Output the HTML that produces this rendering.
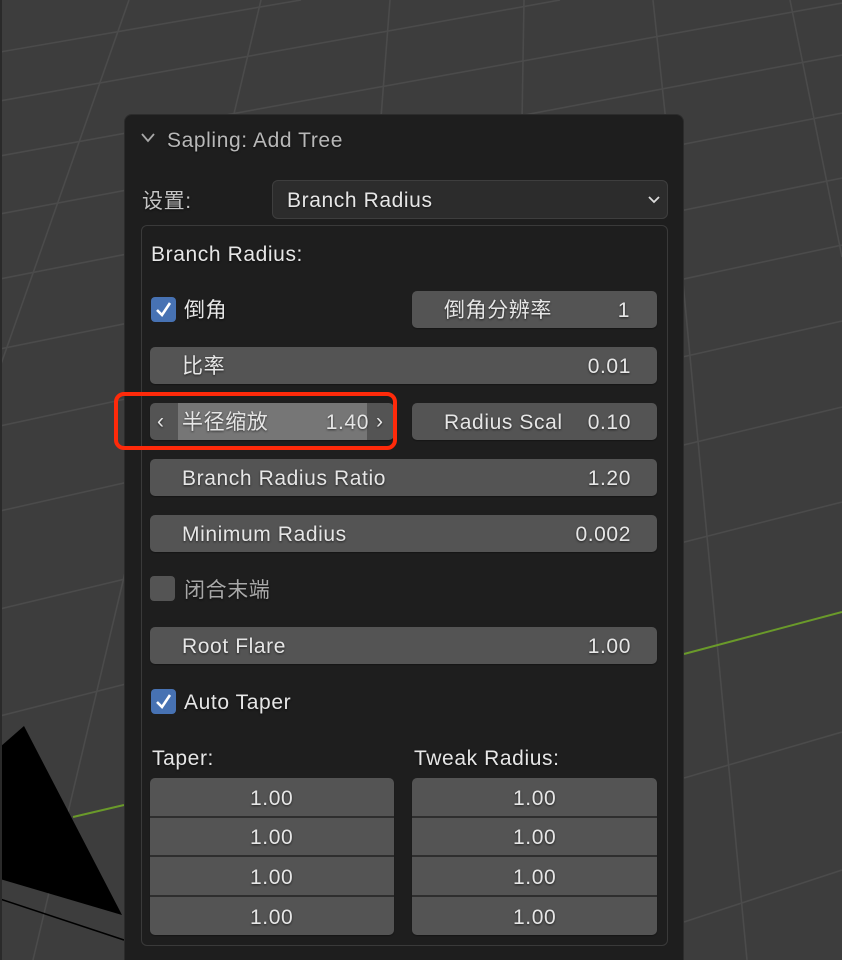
<!DOCTYPE html>
<html><head><meta charset="utf-8"><style>
*{box-sizing:border-box;margin:0;padding:0}
html,body{width:842px;height:960px;overflow:hidden}
body{background:#3d3d3d;position:relative;font-family:"Liberation Sans","Noto Sans CJK SC",sans-serif;font-size:21px;letter-spacing:0.6px;color:#e6e6e6}
.a{position:absolute}
.t{position:absolute;white-space:nowrap;line-height:1;text-shadow:0 1px 2px rgba(0,0,0,.6)}
.r{position:absolute;white-space:nowrap;line-height:1;text-align:right;text-shadow:0 1px 2px rgba(0,0,0,.6)}
.btn{position:absolute;background:#545454;border-radius:5px;box-shadow:0 1px 1px #161616}
.cb{position:absolute;width:25px;height:25px;border-radius:4px;background:#4772b3}
.cb svg{position:absolute;left:3px;top:3px}
</style></head><body>
<svg class="a" style="left:0;top:0" width="842" height="960">
<g stroke="#4b4b4b" stroke-width="1.6" fill="none">
<line x1="0" y1="52" x2="301" y2="0"/><line x1="0" y1="101" x2="560" y2="0"/>
<line x1="0" y1="156" x2="842" y2="3"/><line x1="0" y1="214" x2="842" y2="55"/><line x1="0" y1="279" x2="842" y2="113"/><line x1="0" y1="349" x2="842" y2="178"/><line x1="0" y1="426" x2="842" y2="245"/><line x1="0" y1="511" x2="842" y2="321"/><line x1="0" y1="609" x2="842" y2="407"/><line x1="0" y1="716" x2="842" y2="502"/>
<line x1="684" y1="778" x2="842" y2="732"/><line x1="684" y1="922" x2="842" y2="870"/>
<line x1="129" y1="0" x2="0" y2="367"/><line x1="261" y1="0" x2="33" y2="960"/><line x1="390" y1="0" x2="376" y2="183"/><line x1="524" y1="0" x2="521" y2="183"/><line x1="653" y1="0" x2="683" y2="282"/><line x1="683" y1="282" x2="747" y2="960"/><line x1="790" y1="0" x2="842" y2="257"/>
</g>
<line x1="73" y1="817" x2="124" y2="805" stroke="#6a9a2a" stroke-width="2"/>
<line x1="684" y1="654" x2="842" y2="612" stroke="#6a9a2a" stroke-width="2"/>
<polygon points="0,747 24,726 122,915 0,879" fill="#000"/>
<line x1="0" y1="899" x2="124" y2="940" stroke="#000" stroke-width="1.5"/>
<line x1="1" y1="0" x2="1" y2="960" stroke="#2a2a2a" stroke-width="2"/>
</svg>
<div class="a" style="left:124px;top:114px;width:560px;height:860px;background:#1e1e1e;border:1px solid #2c2c2c;border-radius:8px"></div>
<svg class="a" style="left:140px;top:132px" width="16" height="12"><path d="M2 2 L8 9 L14 2" stroke="#a8a8a8" stroke-width="1.8" fill="none"/></svg>
<div class="t" style="left:167px;top:130px;color:#b8b8b8">Sapling: Add Tree</div>
<div class="t" style="left:142px;top:191px;color:#c4c4c4">设置:</div>
<div class="a" style="left:272px;top:180px;width:396px;height:39px;background:#2c2c2c;border:1px solid #3e3e3e;border-radius:6px"></div>
<div class="t" style="left:287px;top:190px">Branch Radius</div>
<svg class="a" style="left:647px;top:195px" width="14" height="10"><path d="M2 2 L7 7 L12 2" stroke="#ddd" stroke-width="1.8" fill="none"/></svg>
<div class="a" style="left:141px;top:225px;width:527px;height:721px;border:1.5px solid #3a3a3a;border-radius:6px"></div>
<div class="t" style="left:151px;top:244px">Branch Radius:</div>
<div class="cb" style="left:151px;top:297px"><svg width="19" height="19"><path d="M3 10 L8 15 L16 3" stroke="#fff" stroke-width="2.6" fill="none"/></svg></div>
<div class="t" style="left:184px;top:300px">倒角</div>
<div class="btn" style="left:412px;top:291px;width:245px;height:37px"></div>
<div class="t" style="left:444px;top:300px">倒角分辨率</div><div class="r" style="right:212px;top:300px">1</div>
<div class="btn" style="left:150px;top:347px;width:507px;height:37px"></div>
<div class="t" style="left:182px;top:356px">比率</div><div class="r" style="right:211px;top:356px">0.01</div>
<div class="btn" style="left:150px;top:403px;width:244px;height:37px"></div>
<div class="a" style="left:178px;top:403px;width:189px;height:37px;background:#767676"></div>
<div class="t" style="left:157px;top:411px">‹</div><div class="t" style="left:376px;top:411px">›</div>
<div class="t" style="left:182px;top:412px">半径缩放</div><div class="r" style="right:473px;top:412px">1.40</div>
<div class="a" style="left:114px;top:392px;width:283px;height:58px;border:4px solid #ff2a0a;border-radius:10px"></div>
<div class="btn" style="left:412px;top:403px;width:245px;height:37px"></div>
<div class="t" style="left:444px;top:412px">Radius Scal</div><div class="r" style="right:211px;top:412px">0.10</div>
<div class="btn" style="left:150px;top:459px;width:507px;height:37px"></div>
<div class="t" style="left:182px;top:468px">Branch Radius Ratio</div><div class="r" style="right:211px;top:468px">1.20</div>
<div class="btn" style="left:150px;top:515px;width:507px;height:37px"></div>
<div class="t" style="left:182px;top:524px">Minimum Radius</div><div class="r" style="right:211px;top:524px">0.002</div>
<div class="cb" style="left:150px;top:576px;background:#545454"></div>
<div class="t" style="left:184px;top:580px;color:#a8a8a8">闭合末端</div>
<div class="btn" style="left:150px;top:627px;width:507px;height:37px"></div>
<div class="t" style="left:182px;top:636px">Root Flare</div><div class="r" style="right:211px;top:636px">1.00</div>
<div class="cb" style="left:151px;top:689px"><svg width="19" height="19"><path d="M3 10 L8 15 L16 3" stroke="#fff" stroke-width="2.6" fill="none"/></svg></div>
<div class="t" style="left:184px;top:692px">Auto Taper</div>
<div class="t" style="left:152px;top:748px">Taper:</div>
<div class="t" style="left:414px;top:748px">Tweak Radius:</div>
<div class="btn" style="left:150px;top:778px;width:244px;height:157px;background:linear-gradient(#545454 0 38px,#2e2e2e 38px 40px,#545454 40px 77px,#2e2e2e 77px 79px,#545454 79px 117px,#2e2e2e 117px 119px,#545454 119px)"></div>
<div class="btn" style="left:412px;top:778px;width:245px;height:157px;background:linear-gradient(#545454 0 38px,#2e2e2e 38px 40px,#545454 40px 77px,#2e2e2e 77px 79px,#545454 79px 117px,#2e2e2e 117px 119px,#545454 119px)"></div>
<div class="t" style="left:250px;top:788px">1.00</div><div class="t" style="left:250px;top:827px">1.00</div><div class="t" style="left:250px;top:867px">1.00</div><div class="t" style="left:250px;top:907px">1.00</div>
<div class="t" style="left:513px;top:788px">1.00</div><div class="t" style="left:513px;top:827px">1.00</div><div class="t" style="left:513px;top:867px">1.00</div><div class="t" style="left:513px;top:907px">1.00</div>
</body></html>
